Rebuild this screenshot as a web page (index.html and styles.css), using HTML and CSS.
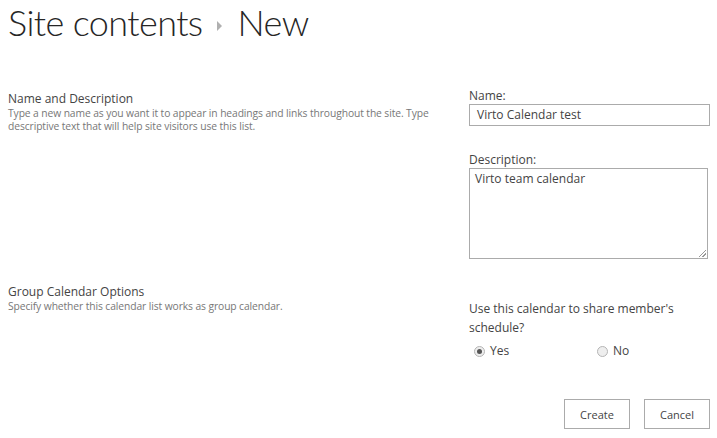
FILE: index.html
```html
<!DOCTYPE html>
<html>
<head>
<meta charset="utf-8">
<link rel="stylesheet" href="styles.css">
</head>
<body>
<h1 class="title"><span>Site contents</span><span class="crumb-arrow"></span><span>New</span></h1>
<div class="form">
  <section class="row row-name">
    <div class="info">
      <h2 class="info-title">Name and Description</h2>
      <p class="info-desc">Type a new name as you want it to appear in headings and links throughout the site. Type<br>descriptive text that will help site visitors use this list.</p>
    </div>
    <div class="fields">
      <label class="field-label">Name:</label>
      <div class="input">Virto Calendar test</div>
      <label class="field-label label-desc">Description:</label>
      <div class="textarea">Virto team calendar<span class="grip"></span></div>
    </div>
  </section>
  <section class="row row-group">
    <div class="info">
      <h2 class="info-title">Group Calendar Options</h2>
      <p class="info-desc">Specify whether this calendar list works as group calendar.</p>
    </div>
    <div class="fields">
      <p class="question">Use this calendar to share member's schedule?</p>
      <div class="radios">
        <span class="radio-opt opt-yes"><span class="radio checked"></span>Yes</span>
        <span class="radio-opt"><span class="radio"></span>No</span>
      </div>
    </div>
  </section>
  <div class="buttons">
    <span class="btn">Create</span>
    <span class="btn">Cancel</span>
  </div>
</div>
</body>
</html>
```
FILE: styles.css
```css
html, body { margin: 0; padding: 0; background: #fff; }
body {
  padding: 0 6px 0 8px;
  font-family: "Open Sans", "Noto Sans", sans-serif;
  color: #444;
  width: 703px;
}
.title {
  margin: 0;
  height: 60px;
  font-family: "Lato", "Open Sans", sans-serif;
  font-weight: 300;
  font-size: 36px;
  line-height: normal;
  color: #262626;
  display: flex;
  align-items: flex-start;
  letter-spacing: -0.6px;
}
.crumb-arrow {
  width: 0; height: 0;
  border-left: 5px solid #b0b0b0;
  border-top: 5px solid transparent;
  border-bottom: 5px solid transparent;
  margin: 21px 16px 0 14px;
}
.form { padding-top: 31px; }
.row { display: grid; grid-template-columns: 461px 241px; }
.row-name .fields { margin-top: -3px; }
.info-title {
  margin: 0; font-weight: 400; font-size: 12px; line-height: 16px; color: #444;
}
.info-desc {
  margin: 0; font-size: 10.3px; line-height: 13px; color: #777; letter-spacing: -0.1px;
}
.field-label { display: block; font-size: 12px; line-height: 16px; color: #444; }
.input {
  box-sizing: border-box; height: 22px; border: 1px solid #ababab;
  font-size: 12px; line-height: 20px; padding-left: 7px; color: #444;
}
.label-desc { margin-top: 26px; }
.textarea {
  position: relative;
  box-sizing: border-box; width: 239px; height: 91px; border: 1px solid #ababab;
  font-size: 12px; line-height: 18px; padding: 1px 0 0 5px; color: #444;
}
.grip {
  position: absolute; right: 1px; bottom: 1px; width: 7px; height: 7px;
  background: linear-gradient(135deg, transparent 45%, #999 45%, #999 55%, transparent 55%, transparent 70%, #999 70%, #999 80%, transparent 80%);
}
.row-group { margin-top: 25px; }
.row-group .fields { padding-top: 15px; }
.question { margin: 0; font-size: 12px; line-height: 19px; color: #444; }
.radios { display: flex; font-size: 12px; line-height: 18px; margin-top: 5px; }
.radio-opt { display: flex; align-items: center; }
.opt-yes { width: 123px; }
.radio {
  box-sizing: border-box; width: 11px; height: 11px; border-radius: 50%;
  border: 1px solid #b5b5b5; background: #eee; margin: 0 5px 0 5px;
  display: flex; align-items: center; justify-content: center;
}
.radio.checked::after {
  content: ""; width: 5px; height: 5px; border-radius: 50%; background: #555;
}
.buttons { display: flex; justify-content: flex-end; gap: 14px; margin-top: 39px; padding-right: 1px; }
.btn {
  box-sizing: border-box; width: 66px; height: 30px; border: 1px solid #ababab;
  display: flex; align-items: center; justify-content: center;
  font-size: 11px; color: #444; background: #fff;
}
```
